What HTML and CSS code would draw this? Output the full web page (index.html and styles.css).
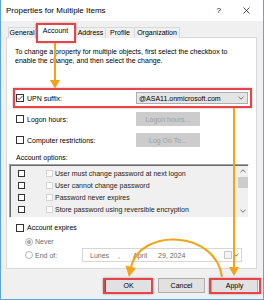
FILE: index.html
```html
<!DOCTYPE html>
<html>
<head>
<meta charset="utf-8">
<title>Properties for Multiple Items</title>
<link rel="stylesheet" href="styles.css">
</head>
<body>
<div class="window">
  <div class="titlebar">
    <span class="title">Properties for Multiple Items</span>
    <span class="help">?</span>
    <svg class="close" width="7" height="7" viewBox="0 0 7 7"><path d="M0.5 0.5L6.5 6.5M6.5 0.5L0.5 6.5"/></svg>
  </div>
  <div class="tabs">
    <div class="tab t-general">General</div>
    <div class="tab t-account sel hl">Account</div>
    <div class="tab t-address">Address</div>
    <div class="tab t-profile">Profile</div>
    <div class="tab t-org">Organization</div>
  </div>
  <div class="panel">
    <p class="intro">To change a property for multiple objects, first select the checkbox to<br>enable the change, and then select the change.</p>
    <div class="row row-upn hl">
      <div class="lbl"><span class="cb"><svg width="6" height="6" viewBox="0 0 6 6"><path d="M0.6 3.1L2.2 4.7L5.4 1.1"/></svg></span>UPN suffix:</div>
      <div class="combo"><span>@ASA11.onmicrosoft.com</span><svg class="chev" width="6" height="4" viewBox="0 0 6 4"><path d="M0.5 0.8L3 3.2L5.5 0.8"/></svg></div>
    </div>
    <div class="row row-logon">
      <div class="lbl"><span class="cb"></span>Logon hours:</div>
      <div class="btn-dis">Logon hours...</div>
    </div>
    <div class="row row-comp">
      <div class="lbl"><span class="cb"></span>Computer restrictions:</div>
      <div class="btn-dis">Log On To...</div>
    </div>
    <div class="opts-label">Account options:</div>
    <div class="listbox">
      <div class="items">
        <div class="item"><span class="cb sm"></span><span class="cb sm dis"></span>User must change password at next logon</div>
        <div class="item"><span class="cb sm"></span><span class="cb sm dis"></span>User cannot change password</div>
        <div class="item"><span class="cb sm"></span><span class="cb sm dis"></span>Password never expires</div>
        <div class="item"><span class="cb sm"></span><span class="cb sm dis"></span>Store password using reversible encryption</div>
      </div>
      <div class="scroll">
        <div class="sbtn"><svg width="6" height="4" viewBox="0 0 6 4"><path d="M0.5 3.2L3 0.8L5.5 3.2"/></svg></div>
        <div class="thumb"></div>
        <div class="sspace"></div>
        <div class="sbtn"><svg width="6" height="4" viewBox="0 0 6 4"><path d="M0.5 0.8L3 3.2L5.5 0.8"/></svg></div>
      </div>
    </div>
    <div class="row row-exp">
      <div class="lbl"><span class="cb"></span>Account expires</div>
    </div>
    <div class="radio-row r-never"><span class="radio on"></span><span class="rlabel">Never</span></div>
    <div class="radio-row r-end">
      <span class="radio"></span><span class="rlabel">End of:</span>
      <div class="date">
        <span class="d-day">Lunes</span><span class="d-comma">,</span><span class="d-month">April</span><span class="d-rest">29, 2024</span>
        <span class="d-cal"></span>
        <svg class="d-chev" width="6" height="4" viewBox="0 0 6 4"><path d="M0.5 0.8L3 3.2L5.5 0.8"/></svg>
      </div>
    </div>
  </div>
  <div class="buttons">
    <div class="btn default hl hl-ok">OK</div>
    <div class="btn">Cancel</div>
    <div class="btn hl hl-apply">Apply</div>
  </div>
  <svg class="arrows" width="264" height="300" viewBox="0 0 264 300">
    <g class="arr-line">
      <path d="M55 43V81"/>
      <path d="M234 108V268"/>
      <path d="M222 277C216 230 140 228 131 267"/>
    </g>
    <g class="arr-head">
      <polygon points="50,80 60,80 55,88.5"/>
      <polygon points="229,267 239,267 234,276"/>
      <polygon points="125.5,265.5 136,268 129,277"/>
    </g>
  </svg>
</div>
</body>
</html>
```

FILE: styles.css
```css
html, body {
  margin: 0;
  padding: 0;
  background: #f0f0f0;
}

.window {
  position: relative;
  width: 264px;
  height: 300px;
  box-sizing: border-box;
  border: 1px solid #5ea4e0;
  border-top: none;
  background: #f0f0f0;
  font-family: "Liberation Sans", Arial, sans-serif;
  font-size: 7px;
  line-height: 9px;
  color: #000;
  overflow: hidden;
}

/* title bar */
.titlebar {
  height: 21px;
  background: #fff;
  display: flex;
  align-items: center;
  padding-left: 5px;
}
.title {
  font-size: 8px;
}
.help {
  margin-left: auto;
  margin-right: 22px;
  font-size: 8px;
}
.close {
  margin-right: 13px;
}
.close path {
  stroke: #222;
  stroke-width: 0.8;
  fill: none;
}

/* tabs */
.tabs {
  display: flex;
  align-items: flex-end;
  height: 14px;
  margin-top: 3px;
  padding-left: 7px;
}
.tab {
  box-sizing: border-box;
  height: 11px;
  border: 1px solid #d9d9d9;
  border-bottom: none;
  background: #f0f0f0;
  text-align: center;
  line-height: 10px;
  margin-left: -1px;
}
.t-general { width: 28px; margin-left: 0; }
.t-account { width: 41px; }
.t-address { width: 31px; }
.t-profile { width: 30px; }
.t-org { width: 46px; }
.tab.sel {
  height: 14px;
  background: #fff;
  position: relative;
  z-index: 1;
  line-height: 12px;
}

/* highlight boxes */
.hl { position: relative; }
.hl::after {
  content: "";
  position: absolute;
  border: 2px solid #e8424a;
  box-shadow: 0 0 2px rgba(0, 0, 0, 0.35);
  pointer-events: none;
}
.t-account::after { top: -2px; left: 0; right: -1px; bottom: -5px; }
.row-upn::after { top: -4px; left: -3px; right: -4px; bottom: -4px; }
.hl-ok::after { top: -1px; left: -3px; right: -2px; bottom: -2px; }
.hl-apply::after { top: -1px; left: -3px; right: -4px; bottom: -2px; }

/* panel */
.panel {
  margin: -1px 6px 0 5px;
  height: 232px;
  box-sizing: border-box;
  border: 1px solid #d9d9d9;
  background: #fff;
  display: flex;
  flex-direction: column;
}
.intro {
  margin: 9px 0 0 8px;
  line-height: 9px;
}

.row {
  display: flex;
  align-items: center;
  margin-left: 9px;
  margin-right: 8px;
}
.lbl {
  width: 120px;
  display: flex;
  align-items: center;
}
.cb {
  box-sizing: border-box;
  width: 8px;
  height: 8px;
  border: 1px solid #333;
  background: #fff;
  margin-right: 3px;
  display: flex;
  align-items: center;
  justify-content: center;
  flex: none;
}
.cb path {
  stroke: #333;
  stroke-width: 0.9;
  fill: none;
}
.row-upn { margin-top: 27px; height: 12px; }
.row-logon { margin-top: 8px; height: 14px; }
.row-comp { margin-top: 7px; height: 14px; }
.row-exp { margin-top: 5px; height: 9px; }

.combo {
  flex: 1;
  height: 12px;
  box-sizing: border-box;
  border: 1px solid #adadad;
  background: #e5e5e5;
  display: flex;
  align-items: center;
  padding-left: 2px;
  padding-right: 3px;
}
.combo span { flex: 1; }
.chev path, .sbtn path, .d-chev path {
  stroke: #555;
  stroke-width: 0.8;
  fill: none;
}

.btn-dis {
  width: 64px;
  height: 14px;
  background: #cccccc;
  color: #a0a0a0;
  display: flex;
  align-items: center;
  justify-content: center;
}

.opts-label {
  margin: 6px 0 0 9px;
  line-height: 9px;
}

.listbox {
  margin: 2px 7px 0 2px;
  height: 54px;
  box-sizing: border-box;
  border: 1px solid;
  border-color: #a0a0a0 #ffffff #ffffff #a0a0a0;
  box-shadow: inset 1px 1px 0 #696969;
  background: #f0f0f0;
  display: flex;
}
.items {
  flex: 1;
  padding-top: 2px;
}
.item {
  height: 12px;
  display: flex;
  align-items: center;
  color: #222;
}
.cb.sm {
  width: 7px;
  height: 7px;
  margin-left: 8px;
  margin-right: 0;
}
.cb.sm.dis {
  border-color: #d4d4d4;
  margin-left: 21px;
  margin-right: 2px;
}
.scroll {
  width: 11px;
  display: flex;
  flex-direction: column;
}
.sbtn {
  height: 12px;
  display: flex;
  align-items: center;
  justify-content: center;
}
.thumb {
  height: 11px;
  margin-left: 1px;
  background: #cdcdcd;
}
.sspace { flex: 1; }

.radio-row {
  display: flex;
  align-items: center;
  margin-left: 18px;
  color: #6d6d6d;
}
.r-never { margin-top: 5px; height: 9px; }
.r-end { margin-top: 2px; height: 14px; }
.radio {
  box-sizing: border-box;
  width: 8px;
  height: 8px;
  border: 1px solid #b5b5b5;
  border-radius: 50%;
  background: #fff;
  margin-right: 2px;
  display: flex;
  align-items: center;
  justify-content: center;
  flex: none;
}
.radio.on::before {
  content: "";
  width: 4px;
  height: 4px;
  border-radius: 50%;
  background: #a8a8a8;
}
.r-end .rlabel { width: 47px; }

.date {
  width: 160px;
  height: 14px;
  box-sizing: border-box;
  border: 1px solid #d6d6d6;
  background: #fff;
  display: flex;
  align-items: center;
  color: #6d6d6d;
}
.d-day { margin-left: 7px; }
.d-comma { margin-left: 9px; }
.d-month { margin-left: 13px; }
.d-rest { margin-left: 11px; }
.d-cal {
  box-sizing: border-box;
  width: 8px;
  height: 8px;
  border: 1px solid #c8c8c8;
  background: #f4f4f4;
  margin-left: auto;
  margin-right: 1px;
}
.d-chev { margin-right: 2px; }

/* bottom buttons */
.buttons {
  display: flex;
  justify-content: flex-end;
  gap: 6px;
  margin: 9px 5px 0 0;
}
.btn {
  box-sizing: border-box;
  width: 47px;
  height: 15px;
  border: 1px solid #adadad;
  background: #e1e1e1;
  display: flex;
  align-items: center;
  justify-content: center;
}
.btn.default {
  border-color: #0078d7;
}

/* annotation arrows */
.arrows {
  position: absolute;
  top: 0;
  left: -1px;
  pointer-events: none;
  z-index: 5;
}
.arr-line path {
  stroke: #f2a416;
  stroke-width: 2;
  fill: none;
}
.arr-head polygon {
  fill: #f2a416;
}
```
